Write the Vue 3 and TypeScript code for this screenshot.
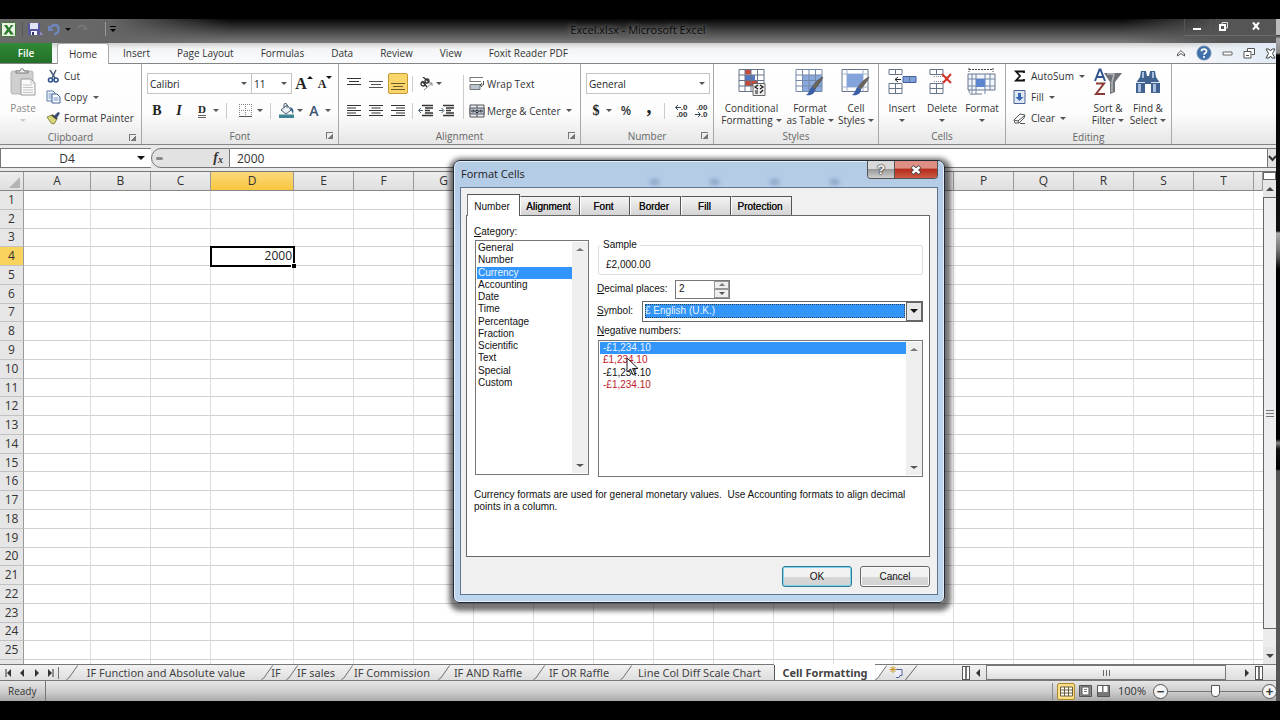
<script setup lang="ts">
import { ref } from 'vue'

const ribbonTabs = ['Home', 'Insert', 'Page Layout', 'Formulas', 'Data', 'Review', 'View', 'Foxit Reader PDF']
const columns = 'ABCDEFGHIJKLMNOPQRST'.split('')
const rows = Array.from({ length: 26 }, (_, i) => i + 1)

const sheets = [
  { name: 'IF Function and Absolute value', width: 195 },
  { name: 'IF', width: 25 },
  { name: 'IF sales', width: 55 },
  { name: 'IF Commission', width: 97 },
  { name: 'IF AND Raffle', width: 95 },
  { name: 'IF OR Raffle', width: 87 },
  { name: 'Line Col Diff Scale Chart', width: 154 },
]

const dialogTabs = ['Number', 'Alignment', 'Font', 'Border', 'Fill', 'Protection']
const categories = ['General', 'Number', 'Currency', 'Accounting', 'Date', 'Time', 'Percentage', 'Fraction', 'Scientific', 'Text', 'Special', 'Custom']
const category = ref('Currency')
const negatives = [
  { text: '-£1,234.10', red: false },
  { text: '£1,234.10', red: true },
  { text: '-£1,234.10', red: false },
  { text: '-£1,234.10', red: true },
]
const negative = ref(0)
const decimals = ref('2')
const formula = ref('2000')
const cellName = ref('D4')
const zoom = ref(50)
</script>

<template>
  <div class="screen">
    <main class="app">
      <header class="title">
        <div class="quick">
          <svg width="15" height="15" viewBox="0 0 15 15"><rect x=".5" y=".5" width="14" height="14" rx="1" fill="#e9f2e4" stroke="#3c7a33" /><path d="M3 3h3l2 3 2-3h2.500L9 7.500l4 5H9.500L7.500 9.500 5.500 12.500H2.500L6 7.500z" fill="#2c7a2a" /></svg>
          <i class="tsep"></i>
          <button aria-label="Save"><svg width="16" height="14" viewBox="0 0 16 14"><path d="M1 1h11l1 1v11H1z" fill="#55579f" /><path d="M3 1h8v6H3z" fill="#dfe3f4" /><path d="M4 9h6v4H4z" fill="#f4f5fb" /><path d="M5 10h2v3H5z" fill="#33356e" /><path d="M13 9l3 4h-3z" fill="#8d90c8" /></svg></button>
          <button aria-label="Undo"><svg width="14" height="14" viewBox="0 0 14 14"><path d="M4 5.500C6 2 11 2 11.500 6.500S9 12 7 12.500" fill="none" stroke="#6f86bd" stroke-width="2.500" /><path d="M1 3v6h6z" fill="#6f86bd" /></svg></button>
          <i class="dn black"></i>
          <button aria-label="Redo"><svg width="14" height="14" viewBox="0 0 14 14"><path d="M10 5C8 2.500 4 3 3 6" fill="none" stroke="#777" stroke-width="2" /><path d="M12 3v5H8z" fill="#777" /></svg></button>
          <i class="tsep last"></i>
          <i class="more"></i>
        </div>
        <h1>Excel.xlsx - Microsoft Excel</h1>
        <div class="winbtns">
          <button aria-label="Minimize"><svg width="10" height="10" viewBox="0 0 10 10"><path d="M1 7h8v2H1z" fill="#fff" /></svg></button>
          <button aria-label="Restore"><svg width="11" height="11" viewBox="0 0 11 11"><path d="M4 3V1.500h5.500V7H8" fill="none" stroke="#ddd" /><path d="M2 4h5v5H2z" fill="none" stroke="#fff" stroke-width="2" /></svg></button>
          <button aria-label="Close"><svg width="10" height="10" viewBox="0 0 10 10"><path d="M2 1.500l6 7M8 1.500l-6 7" stroke="#fff" stroke-width="2" /></svg></button>
        </div>
      </header>

      <nav class="tabs">
        <button class="file">File</button>
        <button v-for="t in ribbonTabs" :key="t" class="tab" :class="{ on: t === 'Home' }">{{ t }}</button>
        <div class="docbtns">
          <svg width="10" height="10" viewBox="0 0 10 10"><path d="M1.500 6L5 2.500 8.500 6v2L5 5.500 1.500 8z" fill="#fff" stroke="#555" /></svg>
          <svg width="16" height="16" viewBox="0 0 16 16"><circle cx="8" cy="8" r="7" fill="#3f6fa8" stroke="#6d8cb4" /><path d="M5.500 6.200C5.500 3.300 10.500 3.300 10.500 6.200 10.500 8 8 7.800 8 9.800" fill="none" stroke="#fff" stroke-width="1.800" /><circle cx="8" cy="12" r="1.100" fill="#fff" /></svg>
          <svg width="11" height="10" viewBox="0 0 11 10"><path d="M1 4h9v3H1z" fill="#fff" stroke="#666" /></svg>
          <svg width="12" height="12" viewBox="0 0 12 12"><path d="M4.500 4V1.500h7v6H9" fill="#fff" stroke="#555" /><path d="M1 4.500h7V11H1z" fill="#fff" stroke="#555" /><path d="M3 8h3v1H3z" fill="#555" /></svg>
          <svg width="11" height="11" viewBox="0 0 11 11"><path d="M1 1h3l1.500 2L7 1h3L7.500 5.500 10 10H7L5.500 8 4 10H1l2.500-4.500z" fill="#fff" stroke="#444" /></svg>
        </div>
      </nav>

      <section class="ribbon">
        <div class="group clip">
          <div class="body">
            <button class="big paste">
              <svg width="26" height="28" viewBox="0 0 26 28"><rect x="1" y="3" width="22" height="23" rx="2" fill="#cfcfcf" stroke="#b4b4b4" /><path d="M6 5V3h4c0-3 4-3 4 0h4v2z" fill="#eee" stroke="#777" /><path d="M11 11h10l4 4v12H11z" fill="#fafafa" stroke="#999" /><path d="M21 11v4h4M13 17h9M13 19.500h10M13 22h10M13 24.500h10" fill="none" stroke="#c4c4c4" /></svg>
              <span>Paste</span><i class="dn pale"></i>
            </button>
            <div class="stack">
              <button><svg width="15" height="14" viewBox="0 0 15 14"><path d="M4 1l5 8M10 1L6 9" stroke="#4d5d75" stroke-width="1.500" /><circle cx="4.500" cy="11" r="2" fill="none" stroke="#2d4f8f" stroke-width="1.600" /><circle cx="10" cy="11" r="2" fill="none" stroke="#2d4f8f" stroke-width="1.600" /></svg>Cut</button>
              <button><svg width="15" height="14" viewBox="0 0 15 14"><path d="M1 1h6l2 2v8H1z" fill="#eef4fb" stroke="#5b7ca6" /><path d="M2.500 4h4M2.500 6h4M2.500 8h4" stroke="#7f9cc2" /><path d="M6 4h5l3 3v6H6z" fill="#fff" stroke="#3d659b" /><path d="M7.500 8h5M7.500 10h5" stroke="#6e93c4" /></svg>Copy<i class="dn"></i></button>
              <button><svg width="15" height="14" viewBox="0 0 15 14"><path d="M8 5l4-4 2 1-3 5z" fill="#3c4c7a" /><path d="M1 6l5-2 5 4-3 5-3-1z" fill="#d9d67a" stroke="#8b8a45" /><path d="M6 4l5 4" stroke="#444" stroke-width="2" /></svg>Format Painter</button>
            </div>
          </div>
          <footer><span>Clipboard</span><i class="launch"></i></footer>
        </div>

        <div class="group font">
          <div class="lines">
            <div class="line f1">
              <label class="combo"><select aria-label="Font"><option>Calibri</option></select><i class="dn"></i></label>
              <label class="combo second"><select aria-label="Font size"><option>11</option></select><i class="dn"></i></label>
              <button class="serif grow" aria-label="Grow font">A<i class="up black"></i></button>
              <button class="serif shrink" aria-label="Shrink font">A<i class="dn black"></i></button>
            </div>
            <div class="line f2">
              <button class="serif">B</button>
              <button class="serif it">I</button>
              <button class="serif dunder"><span>D</span></button><i class="dn"></i>
              <i class="vs"></i>
              <button aria-label="Borders"><svg width="13" height="13" viewBox="0 0 13 13"><path d="M.5 0v13M6.500 0v13M12.500 0v13M0 .5h13M0 6.500h13" stroke="#888" stroke-dasharray="1 1" /><path d="M0 12.500h13" stroke="#555" /></svg></button><i class="dn"></i>
              <i class="vs"></i>
              <button aria-label="Fill colour"><svg width="16" height="15" viewBox="0 0 16 15"><path d="M2 7l6-5 4 5-5 4z" fill="#eef3f8" stroke="#46566c" /><path d="M5 5V1.500C5 0 8 0 8 2v3" fill="none" stroke="#46566c" /><path d="M11 4c3 1 4 3 3 7l-2-4z" fill="#2f5f93" /><path d="M0 11.500h15V15H0z" fill="#3d8594" /></svg></button><i class="dn"></i>
              <button class="fcol" aria-label="Font colour">A</button><i class="dn"></i>
            </div>
          </div>
          <footer><span>Font</span><i class="launch"></i></footer>
        </div>

        <div class="group align">
          <div class="agrid">
            <button aria-label="Top"><svg width="14" height="13" viewBox="0 0 14 13"><path d="M0 1.500h14M2 4.500h10M0 7.500h14" stroke="#333" /></svg></button>
            <button aria-label="Middle"><svg width="14" height="13" viewBox="0 0 14 13"><path d="M0 4.500h14M2 7.500h10M0 10.500h14" stroke="#555" /></svg></button>
            <button class="sel" aria-label="Bottom"><svg width="14" height="13" viewBox="0 0 14 13"><path d="M0 6.500h14M2 9.500h10M0 12.500h14" stroke="#6b5a2a" /></svg></button>
            <i class="vs"></i>
            <button class="wide" aria-label="Orientation"><svg width="15" height="14" viewBox="0 0 15 14"><g fill="none" stroke="#333" stroke-width="1.300"><circle cx="4" cy="7" r="2" /><path d="M3 4l5 6" /><circle cx="8" cy="4" r="2" /><path d="M4 0l6 5" /></g><path d="M5 13l8-7M13 6v3M13 6h-3" stroke="#888" fill="none" /></svg><i class="dn"></i></button>
            <i class="vs tall"></i>
            <button class="txt"><svg width="16" height="15" viewBox="0 0 16 15"><path d="M1 1.500h13M1 5.500h11M1 1v5" stroke="#777" fill="none" /><path d="M1 8.500h10v5H1z" fill="#b9c3d2" stroke="#777" /><path d="M14.500 5v4h-3M13 7l-2 2 2 2" fill="none" stroke="#555" /></svg>Wrap Text</button>
            <button aria-label="Left"><svg width="14" height="13" viewBox="0 0 14 13"><path d="M0 1.500h14M0 4h9M0 6.500h14M0 9h9M0 11.500h14" stroke="#333" /></svg></button>
            <button aria-label="Centre"><svg width="14" height="13" viewBox="0 0 14 13"><path d="M0 1.500h14M2.500 4h9M0 6.500h14M2.500 9h9M0 11.500h14" stroke="#333" /></svg></button>
            <button aria-label="Right"><svg width="14" height="13" viewBox="0 0 14 13"><path d="M0 1.500h14M5 4h9M0 6.500h14M5 9h9M0 11.500h14" stroke="#333" /></svg></button>
            <i class="vs"></i>
            <button aria-label="Decrease indent"><svg width="15" height="13" viewBox="0 0 15 13"><path d="M4 1.500h11M7 4h8M7 6.500h5M7 9h8M4 11.500h11" stroke="#333" stroke-width="1.400" /><path d="M5 6.500H1M3 4L.5 6.500 3 9" fill="none" stroke="#4a5a72" /></svg></button>
            <button aria-label="Increase indent"><svg width="15" height="13" viewBox="0 0 15 13"><path d="M4 1.500h11M7 4h8M7 6.500h5M7 9h8M4 11.500h11" stroke="#333" stroke-width="1.400" /><path d="M0 6.500h4M2.500 4L5 6.500 2.500 9" fill="none" stroke="#4a5a72" /></svg></button>
            <button class="txt"><svg width="16" height="14" viewBox="0 0 16 14"><path d="M1 1h14v12H1zM8 1v3M8 10v3" fill="#e9eef6" stroke="#555" /><path d="M1 4h14v6H1z" fill="#bcc8da" stroke="#555" /><path d="M2 7h3M4 5.500L5.500 7 4 8.500M14 7h-3M12 5.500L10.500 7 12 8.500" stroke="#222" fill="none" /><circle cx="8" cy="7.300" r="1.300" fill="none" stroke="#111" /></svg>Merge &amp; Center<i class="dn"></i></button>
          </div>
          <footer><span>Alignment</span><i class="launch"></i></footer>
        </div>

        <div class="group number">
          <div class="lines">
            <label class="combo"><select aria-label="Number format"><option>General</option></select><i class="dn"></i></label>
            <div class="line n2">
              <button class="serif">$</button><i class="dn"></i>
              <button class="pct">%</button>
              <button class="serif comma">,</button>
              <i class="vs"></i>
              <button class="dec" aria-label="Increase decimal"><span><svg width="6" height="5" viewBox="0 0 6 5"><path d="M6 2.500H1M3 0L.5 2.500 3 5" fill="none" stroke="#345" /></svg>.0</span><span>.00</span></button>
              <button class="dec" aria-label="Decrease decimal"><span>.00</span><span><svg width="6" height="5" viewBox="0 0 6 5"><path d="M0 2.500h5M3 0l2.500 2.500L3 5" fill="none" stroke="#345" /></svg>.0</span></button>
            </div>
          </div>
          <footer><span>Number</span><i class="launch"></i></footer>
        </div>

        <div class="group styles">
          <div class="body">
            <button class="big w66">
              <svg width="30" height="28" viewBox="0 0 30 28"><path d="M2 1.500h25v22H2z" fill="#fff" /><path d="M8 1.500h6v5H8zM8 13h12v5H8z" fill="#c8493c" /><path d="M8 7h10v5.500H8z" fill="#5277c4" /><path d="M2 1.500h25v22H2zM2 7h25M2 12.500h25M2 18h25M8 1.500v22M14 1.500v22M20.500 1.500v22" fill="none" stroke="#66748a" /><path d="M16 15.500h12v12H16z" fill="#eee" stroke="#666" /><path d="M21 17l-3 2 3 2M18 23h3M18 25h3M23 17l3 2-3 2M23 25l3-3" fill="none" stroke="#111" stroke-width="1.200" /></svg>
              <span>Conditional</span><span>Formatting<i class="dn"></i></span>
            </button>
            <button class="big w50">
              <svg width="30" height="28" viewBox="0 0 30 28"><path d="M1 1.500h26v22H1z" fill="#fff" /><path d="M7.500 7H27v16.500H7.500z" fill="#8aa9dd" /><path d="M1 1.500h26v22H1zM1 7h26M1 12.500h26M1 18h26M7.500 1.500v22M14 1.500v22M20.500 1.500v22" fill="none" stroke="#7387a8" /><path d="M28 9c-5 2-8 6-11 10l3 2c3-4 6-7 8-12z" fill="#6b655a" stroke="#444" stroke-width=".5" /><path d="M17 19c-3 1-2 6-6 8 5 1 9-1 9-6z" fill="#3b5fa5" /></svg>
              <span>Format</span><span>as Table<i class="dn"></i></span>
            </button>
            <button class="big w42">
              <svg width="30" height="28" viewBox="0 0 30 28"><path d="M1 1.500h26v22H1z" fill="#fff" stroke="#66748a" /><path d="M1 6h26M1 19h26M6 1.500v22M22 1.500v22" stroke="#9fb0cc" /><path d="M6 6h16v13H6z" fill="#82a3dc" /><path d="M28 9c-5 2-8 6-11 10l3 2c3-4 6-7 8-12z" fill="#6b655a" stroke="#444" stroke-width=".5" /><path d="M17 19c-3 1-2 6-6 8 5 1 9-1 9-6z" fill="#3b5fa5" /></svg>
              <span>Cell</span><span>Styles<i class="dn"></i></span>
            </button>
          </div>
          <footer><span>Styles</span></footer>
        </div>

        <div class="group cells">
          <div class="body">
            <button class="big w40">
              <svg width="30" height="28" viewBox="0 0 30 28"><g fill="#fff" stroke="#66748a"><path d="M2 1.500h13v5H2zM8.500 1.500v5M2 15.500h13v10H2zM2 20.500h13M8.500 15.500v10" /><path d="M16 8.500h13v6H16z" fill="#7fa0da" stroke="#3d5f9c" /><path d="M22.500 8.500v6" /></g><path d="M14 11.500H8M11 9l-3 2.500 3 2.500" fill="none" stroke="#222" /></svg>
              <span>Insert</span><i class="dn"></i>
            </button>
            <button class="big w40">
              <svg width="30" height="28" viewBox="0 0 30 28"><g fill="#fff" stroke="#66748a"><path d="M3 1.500h13v5H3zM9.500 1.500v5M3 15.500h13v10H3zM3 20.500h13M9.500 15.500v10" /></g><path d="M7 8.500h12M7 13.500h12M19 8v6" stroke="#889" stroke-dasharray="1 1" /><path d="M15 6l9 9M24 6l-8 9" stroke="#d2362b" stroke-width="2" /></svg>
              <span>Delete</span><i class="dn"></i>
            </button>
            <button class="big w40">
              <svg width="30" height="28" viewBox="0 0 30 28"><path d="M2 1.500h24M2 0v4M26 0v4" stroke="#444" stroke-dasharray="2 1" /><path d="M1 6h27v16H1z" fill="#f3f6fb" stroke="#66748a" /><path d="M1 11h27M1 18h27M9 6v20M18 6v20M23 6v16M5 6v20" stroke="#7387a8" /><path d="M9 11h9v8H9z" fill="#5c85cf" /><path d="M2 22c0 4 2 5 6 4h7" fill="none" stroke="#66748a" /></svg>
              <span>Format</span><i class="dn"></i>
            </button>
          </div>
          <footer><span>Cells</span></footer>
        </div>

        <div class="group editing">
          <div class="body">
            <div class="stack">
              <button><svg width="13" height="14" viewBox="0 0 13 14"><path d="M11 4V2.500H3L7 7l-4 4.500h8V10" fill="none" stroke="#111" stroke-width="1.800" /></svg>AutoSum<i class="dn far"></i></button>
              <button><svg width="13" height="14" viewBox="0 0 13 14"><path d="M1 .5h11v13H1z" fill="#dfe8f5" stroke="#4a6390" /><path d="M5 3h3v4h2.500l-4 4-4-4H5z" fill="#3c66b4" /></svg>Fill<i class="dn"></i></button>
              <button><svg width="13" height="14" viewBox="0 0 13 14"><path d="M1 9l6-6 5 1-1 3-5 5H2z" fill="#fff" stroke="#555" /><path d="M1 9l4 1 6-5M5 10l1 2M7 12.500h5" fill="none" stroke="#555" /></svg>Clear<i class="dn"></i></button>
            </div>
            <button class="big w40">
              <svg width="30" height="28" viewBox="0 0 30 28"><path d="M2 13L6.500 1.500h1L12 13M4 9h6" fill="none" stroke="#33558f" stroke-width="2" /><path d="M3 15.500h8L3 26h9" fill="none" stroke="#8c3a33" stroke-width="2" /><path d="M11 5h18l-7 9v10l-5 2V14z" fill="#6f7277" /><path d="M14 6h7l-2 8v10" fill="none" stroke="#b8babd" stroke-width="1.500" /></svg>
              <span>Sort &amp;</span><span>Filter<i class="dn"></i></span>
            </button>
            <button class="big w40">
              <svg width="30" height="28" viewBox="0 0 30 28"><path d="M8 3h5l1 5h2l1-5h5l1 6 4 6v10h-9v-9h-6v9H3V15l4-6z" fill="#41618f" /><path d="M5 16h3v8H5zM20 16h3v8h-3zM9 4h2v6H9zM19 4h2v6h-2z" fill="#a9bfdf" /><path d="M3 14.500h9M18 14.500h9" stroke="#dbe5f2" /></svg>
              <span>Find &amp;</span><span>Select<i class="dn"></i></span>
            </button>
          </div>
          <footer><span>Editing</span></footer>
        </div>
      </section>

      <section class="fbar">
        <label class="namebox"><input v-model="cellName" aria-label="Name box" /><i class="dn black"></i></label>
        <div class="fx"><i class="knob"></i><button aria-label="Insert function">f<small>x</small></button></div>
        <input v-model="formula" class="formula" aria-label="Formula" />
        <button class="expand" aria-label="Expand"><svg width="9" height="7" viewBox="0 0 9 7"><path d="M1 1l3.500 4L8 1" fill="none" stroke="#333" stroke-width="2" /></svg></button>
      </section>

      <section class="work">
        <div class="gridwrap">
          <table class="grid">
            <colgroup><col class="c0" /><col class="cA" /><col class="cn" /><col class="cn" /><col class="cD" /><col v-for="n in 16" :key="n" class="cn" /><col /></colgroup>
            <thead>
              <tr><th class="corner"><svg width="11" height="11" viewBox="0 0 11 11"><path d="M11 0v11H0z" fill="#b4b4b4" /></svg></th><th v-for="c in columns" :key="c" :class="{ hot: c === 'D' }">{{ c }}</th><th></th></tr>
            </thead>
            <tbody>
              <tr v-for="r in rows" :key="r">
                <th :class="{ hot: r === 4 }">{{ r }}</th>
                <td v-for="c in columns" :key="c" :class="{ cur: r === 4 && c === 'D' }">{{ r === 4 && c === 'D' ? '2000' : '' }}</td>
                <td></td>
              </tr>
            </tbody>
          </table>
        </div>
        <div class="vscroll">
          <i class="split"></i>
          <button aria-label="Scroll up"><i class="up big-a"></i></button>
          <div class="vthumb"><i></i><i></i><i></i></div>
          <button aria-label="Scroll down"><i class="dn big-a"></i></button>
        </div>
      </section>

      <section class="sheetbar">
        <div class="navs">
          <button aria-label="First"><svg width="7" height="8" viewBox="0 0 7 8"><path d="M1 0v8" stroke="#333" /><path d="M6 0v8L2 4z" fill="#333" /></svg></button>
          <button aria-label="Previous"><svg width="7" height="8" viewBox="0 0 7 8"><path d="M5 0v8L1 4z" fill="#333" /></svg></button>
          <button aria-label="Next"><svg width="7" height="8" viewBox="0 0 7 8"><path d="M2 0v8l4-4z" fill="#333" /></svg></button>
          <button aria-label="Last"><svg width="7" height="8" viewBox="0 0 7 8"><path d="M6 0v8" stroke="#333" /><path d="M1 0v8l4-4z" fill="#333" /></svg></button>
        </div>
        <button v-for="s in sheets" :key="s.name" class="stab" :style="{ width: s.width + 'px' }">
          <svg class="slash" width="13" height="16" viewBox="0 0 13 16"><path d="M0 15.500L2.500 14 12 .5" fill="none" stroke="#666" /></svg><span>{{ s.name }}</span>
        </button>
        <button class="stab active"><span>Cell Formatting</span></button>
        <button class="stab new" aria-label="Insert sheet">
          <svg class="slash" width="13" height="16" viewBox="0 0 13 16"><path d="M0 0h13L2.500 14 0 15.500z" fill="#fff" /><path d="M0 15.500L2.500 14 12 .5" fill="none" stroke="#666" /></svg>
          <svg width="14" height="13" viewBox="0 0 14 13"><path d="M5 3.500h8v6h-2l-1 2H7" fill="#eef" stroke="#4f649c" /><path d="M4 0v7M.5 3.500h7M1.500 1l5 5M6.500 1l-5 5" stroke="#c79a2b" /></svg>
        </button>
        <svg width="13" height="16" viewBox="0 0 13 16"><path d="M0 15.500L12 .5" fill="none" stroke="#666" /></svg>
        <div class="fill"></div>
        <div class="hscroll">
          <i class="handle"></i>
          <button aria-label="Scroll left"><svg width="6" height="8" viewBox="0 0 6 8"><path d="M5 0v8L1 4z" fill="#333" /></svg></button>
          <div class="hthumb"><i></i><i></i><i></i></div>
          <button class="rt" aria-label="Scroll right"><svg width="6" height="8" viewBox="0 0 6 8"><path d="M1 0v8l4-4z" fill="#333" /></svg></button>
          <i class="handle"></i>
        </div>
      </section>

      <footer class="status">
        <span class="ready">Ready</span>
        <div class="views">
          <button class="sel" aria-label="Normal view"><svg width="13" height="11" viewBox="0 0 13 11"><path d="M.5 1h12v9H.5zM.5 4h12M.5 7h12M4.500 1v9M8.500 1v9" fill="#fff" stroke="#6b5f3a" /></svg></button>
          <button aria-label="Page layout view"><svg width="13" height="12" viewBox="0 0 13 12"><path d="M.5 .5h12v11H.5z" fill="#8b8b8b" stroke="#555" /><path d="M3 2h7v8H3z" fill="#fff" stroke="#555" /><path d="M5 4.500h3M5 6.500h3" stroke="#777" /></svg></button>
          <button aria-label="Page break view"><svg width="13" height="12" viewBox="0 0 13 12"><path d="M.5 .5h12v11H.5z" fill="#777" stroke="#555" /><path d="M1 1h4v6H1zM6.500 1h4v6h-4z" fill="#fff" /></svg></button>
        </div>
        <span class="pct100">100%</span>
        <button class="round" aria-label="Zoom out">−</button>
        <input v-model="zoom" type="range" min="0" max="100" aria-label="Zoom" />
        <button class="round" aria-label="Zoom in">+</button>
      </footer>
    </main>
    <div class="edge"></div>

    <section class="dialog" role="dialog" aria-label="Format Cells">
      <header>
        <h2>Format Cells</h2>
        <div class="ghosts"><i></i><i></i><i></i><i></i></div>
        <div class="dbtns">
          <button aria-label="Help">?</button>
          <button class="x" aria-label="Close"><svg width="12" height="10" viewBox="0 0 12 10"><path d="M2 1.500l8 7M10 1.500l-8 7" stroke="#444" stroke-width="4" /><path d="M2.500 2l7 6M9.500 2l-7 6" stroke="#fff" stroke-width="2.400" /></svg></button>
        </div>
      </header>
      <div class="client">
        <div class="dtabs"><button v-for="t in dialogTabs" :key="t" :class="['t-' + t.toLowerCase(), { on: t === 'Number' }]">{{ t }}</button></div>
        <div class="panel">
          <div class="cols">
            <div class="left">
              <span class="lbl"><u>C</u>ategory:</span>
              <div class="list">
                <div class="items" role="listbox" aria-label="Category">
                  <div v-for="c in categories" :key="c" role="option" :class="{ on: c === category }" @click="category = c">{{ c }}</div>
                </div>
                <div class="sb"><i class="up"></i><i class="dn"></i></div>
              </div>
            </div>
            <div class="right">
              <fieldset><legend>Sample</legend>£2,000.00</fieldset>
              <div class="row decrow">
                <label for="dp"><u>D</u>ecimal places:</label>
                <div class="spin"><input id="dp" v-model="decimals" /><div><button aria-label="More"><i class="up"></i></button><button aria-label="Less"><i class="dn"></i></button></div></div>
              </div>
              <div class="row symrow">
                <label for="sym"><u>S</u>ymbol:</label>
                <div class="drop"><select id="sym"><option>£ English (U.K.)</option></select><span class="arrow"><i class="dn black"></i></span></div>
              </div>
              <span class="lbl neg"><u>N</u>egative numbers:</span>
              <div class="list">
                <div class="items" role="listbox" aria-label="Negative numbers">
                  <div v-for="(n, i) in negatives" :key="i" role="option" :class="{ on: i === negative, red: n.red }" @click="negative = i">{{ n.text }}</div>
                </div>
                <div class="sb"><i class="up"></i><i class="dn"></i></div>
              </div>
            </div>
          </div>
          <p>Currency formats are used for general monetary values.&nbsp; Use Accounting formats to align decimal points in a column.</p>
        </div>
        <div class="actions"><button class="ok">OK</button><button>Cancel</button></div>
      </div>
      <svg class="pointer" width="13" height="20" viewBox="0 0 13 20"><path d="M1 1v14l3.500-3 2.500 6 2-1-2.500-5.500H12z" fill="#fff" stroke="#222" /></svg>
    </section>
  </div>
</template>

<style>
body { margin: 0; background: #000; }
</style>

<style scoped>
* { box-sizing: border-box; }
.screen { position: relative; display: flex; height: 100vh; padding: 19px 0; background: #000; font: 10px/12px "Open Sans", "Noto Sans", sans-serif; color: #333; overflow: hidden; }
.app { flex: 1; min-width: 0; display: flex; flex-direction: column; background: #fff; }
.edge { width: 4px; background: linear-gradient(#bbb 0, #bbb 16px, #333 16px, #aaa 20px, #888 34px, #000 36px, #111 212px, #aaa 214px, #777 230px, #444 240px, #000 250px, #000 420px, #888 424px, #111 430px, #000 450px, #555 452px, #555 100%); }
button, input, select { font: inherit; color: inherit; padding: 0; margin: 0; border: 0; background: none; border-radius: 0; min-width: 0; }
button { display: flex; align-items: center; justify-content: center; white-space: nowrap; }
select { appearance: none; }
svg { display: block; flex: none; }
i { display: block; flex: none; }
.dn { border: 3px solid transparent; border-top-color: #555; border-bottom: 0; width: 6px; height: 3px; }
.up { border: 3px solid transparent; border-bottom-color: #777; border-top: 0; width: 6px; height: 3px; }
.dn.black { border-top-color: #111; }
.up.black { border-bottom-color: #111; }
.dn.pale { border-top-color: #ccc; }

.title { height: 24px; display: flex; justify-content: space-between; background: linear-gradient(90deg, #6a6a6a 0, #666 110px, transparent 230px, transparent 88%, #555 96%), linear-gradient(#060606, #444 50%, #7c7c7c); }
.quick { width: 420px; display: flex; align-items: center; gap: 4px; padding: 0 0 4px 1px; }
.tsep { width: 1px; height: 14px; background: #555; margin: 0 0 0 2px; }
.tsep.last { background: #999; margin-left: 12px; }
.more { width: 6px; height: 7px; border-top: 1px solid #000; position: relative; }
.more::after { content: ""; position: absolute; left: 0; top: 2px; border: 3px solid transparent; border-top-color: #000; border-bottom: 0; }
.title h1 { margin: 0; font: 11px/22px "Open Sans", sans-serif; color: #0a0a0a; text-shadow: 0 0 6px #aaa; white-space: nowrap; }
.winbtns { width: 420px; height: 17px; display: flex; justify-content: flex-end; }
.winbtns button { width: 26px; border-left: 1px solid #555; border-bottom: 1px solid #6a6a6a; padding-bottom: 2px; }
.winbtns button:last-child { width: 40px; }

.tabs { height: 21px; display: flex; background: linear-gradient(#cfcfcf, #f4f5f7 6px, #fafbfc); border-bottom: 1px solid #858585; }
.tabs button { padding: 0 11px; margin-right: 5px; height: 20px; color: #333; }
.tabs .file { width: 52px; margin-right: 5px; background: linear-gradient(#2f8a35, #236f29); color: #fff; font-weight: 600; }
.tabs .tab.on { height: 21px; padding: 0 11px; background: #fff; border: 1px solid #aaa; border-bottom: 0; border-radius: 3px 3px 0 0; margin-right: 3px; width: 52px; }
.docbtns { margin-left: auto; display: flex; align-items: center; gap: 10px; padding: 0; background: linear-gradient(90deg, transparent, #e2ebf6); }

.ribbon { height: 81px; display: flex; background: linear-gradient(#fff 0, #fdfdfd 60%, #e6e6e6); border-bottom: 1px solid #858585; }
.group { display: flex; flex-direction: column; border-right: 1px solid #a8a8a8; }
.group footer { margin-top: auto; height: 16px; display: flex; align-items: center; color: #666; padding-bottom: 1px; }
.group footer span { flex: 1; text-align: center; }
.launch { width: 7px; height: 7px; margin-right: 5px; margin-left: -12px; border: solid #777; border-width: 1px 0 0 1px; background: linear-gradient(135deg, transparent 55%, #777 55%); }
.body { display: flex; padding-top: 4px; }
.clip { width: 142px; } .font { width: 197px; } .align { width: 242px; } .number { width: 133px; } .styles { width: 165px; } .cells { width: 127px; } .editing { width: 166px; }
.big { flex-direction: column; justify-content: flex-start; align-items: center; }
.big svg { margin-bottom: 6px; }
.big span { display: flex; align-items: center; height: 12px; }
.big span .dn { margin-left: 3px; }
.big > .dn { margin-top: 5px; }
.paste { width: 46px; color: #888; }
.stack { display: flex; flex-direction: column; }
.stack button { height: 20px; justify-content: flex-start; gap: 3px; padding-bottom: 4px; margin-bottom: 1px; }
.stack .dn { margin-left: 3px; }
.editing .stack { width: 82px; padding-left: 7px; }
.editing .stack button { gap: 5px; }
.editing .stack .dn { margin-left: 0; }
.w66 { width: 67px; } .w50 { width: 50px; } .w42 { width: 42px; } .w40 { width: 40px; }
.styles .body { padding-left: 4px; }
.cells .body { padding-left: 3px; }

.lines { padding: 9px 3px 0 5px; display: flex; flex-direction: column; gap: 6px; }
.combo { height: 21px; display: flex; align-items: center; border: 1px solid #c4c4c4; background: #fff; padding: 0 4px 0 2px; }
.combo select { flex: 1; height: 19px; color: #222; }
.combo.second { border-left: 0; padding-left: 2px; }
.line { display: grid; align-items: center; height: 21px; grid-template-rows: 21px; }
.f1 { grid-template-columns: 105px 40px 24px 18px; }
.f2 { grid-template-columns: 20px 24px 22px 6px 14px 24px 6px 14px 20px 6px 22px 6px; }
.n2 { grid-template-columns: 20px 6px 28px 18px 12px 20px 20px; }
.serif { font: bold 14px/20px "Liberation Serif", serif; color: #222; }
.grow { font-size: 16px; align-items: flex-end; }
.grow .up, .shrink .dn { align-self: flex-start; margin-top: 2px; }
.shrink { font-size: 12px; }
.it { font-style: italic; }
.dunder { font-size: 11px; }
.dunder span { height: 15px; line-height: 12px; border-bottom: 3px double #666; }
.fcol { color: #3d5470; font: 600 14px/20px "Open Sans", sans-serif; }
.vs { width: 1px; height: 16px; background: #ccc; justify-self: center; }
.pct { font-size: 12px; font-weight: 600; }
.comma { font-size: 20px; line-height: 8px; height: 20px; padding-bottom: 10px; }
.dec { flex-direction: column; font: bold 8px/7px "Liberation Sans", sans-serif; }
.dec span { display: flex; align-items: center; justify-content: flex-end; width: 15px; height: 7px; }

.agrid { display: grid; grid-template-columns: 22px 22px 22px 6px 21px 21px 12px 1fr; grid-template-rows: 21px 21px; row-gap: 6px; padding: 9px 3px 0 4px; align-items: center; }
.agrid .sel { height: 21px; width: 20px; justify-self: center; background: #f9d56a; border: 1px solid #c29a3a; border-radius: 2px; }
.agrid .wide { grid-column: span 2; justify-content: flex-start; padding-left: 4px; gap: 2px; }
.agrid .tall { grid-row: span 2; height: 44px; }
.agrid .txt { justify-content: flex-start; gap: 2px; }
.agrid .txt .dn { margin-left: 3px; }

.fbar { height: 26px; padding: 3px 0; display: flex; background: #e9e9e9; }
.fbar > * { border-top: 1px solid #777; border-bottom: 1px solid #777; }
.namebox { width: 151px; display: flex; align-items: center; background: #fff; border-left: 1px solid #777; padding-right: 6px; }
.namebox input { flex: 1; text-align: center; font-size: 12px; height: 18px; padding-right: 4px; }
.namebox .dn { border-width: 4px; border-bottom: 0; width: 8px; height: 4px; }
.fx { width: 79px; display: flex; align-items: center; justify-content: space-between; background: #e2e2e2; border-left: 1px solid #777; border-radius: 10px 0 0 10px; border-right: 1px solid #777; padding: 0 6px 0 4px; }
.knob { width: 7px; height: 3px; background: #888; border-radius: 2px; }
.fx button { font: italic bold 14px/16px "Liberation Serif", serif; align-items: flex-end; }
.fx small { font-size: 10px; line-height: 13px; }
.formula { flex: 1; background: #fff; font-size: 12px; padding-left: 7px; }
.expand { width: 9px; background: #e2e2e2; border-left: 1px solid #777; }

.work { flex: 1; min-height: 0; display: flex; border-top: 1px solid #777; }
.gridwrap { flex: 1; min-width: 0; overflow: hidden; }
.grid { width: 100%; height: 507px; table-layout: fixed; border-collapse: separate; border-spacing: 0; font-size: 12px; line-height: 14px; }
.c0 { width: 24px; } .cA { width: 67px; } .cn { width: 60px; } .cD { width: 83px; }
.grid th { font-weight: 400; padding: 0; background: #e6e6e6; border-right: 1px solid #999; border-bottom: 1px solid #c2c2c2; }
.grid thead th { height: 19px; border-bottom-color: #888; background: linear-gradient(#ededed, #dfdfdf); }
.grid thead th.hot { background: linear-gradient(#fbd97c, #f8c63f); }
.grid tbody th.hot { background: #fad35e; }
.corner svg { margin: 3px 3px 0 auto; }
.grid td { padding: 0; border-right: 1px solid #dcdcdc; border-bottom: 1px solid #d0d0d0; text-align: right; color: #222; }
.grid td:last-child { border-right: 0; }
.grid td.cur { position: relative; padding-right: 1px; outline: 2px solid #000; outline-offset: -1px; }
.grid td.cur::after { content: ""; position: absolute; right: -3px; bottom: -3px; width: 4px; height: 4px; background: #000; border: solid #fff; border-width: 1px 0 0 1px; }
.vscroll { width: 13px; display: flex; flex-direction: column; background: #ececec; }
.vscroll .split { height: 8px; border: 1px solid #666; background: #fff; }
.vscroll button { height: 17px; background: #e6e6e6; }
.big-a { border-width: 4px; width: 8px; height: 4px; }
.up.big-a { border-top: 0; border-bottom-color: #444; }
.dn.big-a { border-bottom: 0; border-top-color: #444; }
.vthumb { flex: 1; border: solid #666; border-width: 1px 0 1px 1px; margin-bottom: 18px; background: #ededf0; display: flex; flex-direction: column; align-items: center; justify-content: center; gap: 2px; }
.vthumb i { width: 8px; height: 1px; background: #777; }

.sheetbar { height: 17px; display: flex; background: linear-gradient(#f2f2f2, #dedede); border: solid #777; border-width: 1px 0; }
.navs { display: flex; width: 66px; align-items: center; gap: 1px; padding-left: 2px; }
.navs button { width: 13px; height: 15px; }
.navs::after { content: ""; width: 1px; height: 12px; background: #777; }
.stab { display: flex; font: 11px/15px "Noto Sans", sans-serif; height: 15px; color: #444; }
.stab span { flex: 1; text-align: center; }
.stab .slash { margin-right: -8px; height: 15px; }
.stab.active { width: 101px; height: 15px; background: #fff; font-weight: 700; border-left: 1px solid #555; box-shadow: 0 -1px 0 #fff; }
.stab.new { width: 30px; justify-content: flex-start; }
.stab.new .slash { margin-right: 1px; }
.fill { flex: 1; }
.hscroll { width: 314px; padding-right: 13px; display: flex; align-items: center; }
.handle { width: 8px; height: 14px; border: 1px solid #555; background: linear-gradient(90deg, #fff 40%, #777 40%, #777 60%, #fff 60%); }
.hscroll button { width: 16px; height: 15px; }
.hscroll .rt { width: 29px; padding-left: 12px; }
.hthumb { flex: 1; height: 15px; border: 1px solid #777; background: linear-gradient(#fafafa, #ddd); display: flex; justify-content: center; align-items: center; gap: 2px; }
.hthumb i { width: 1px; height: 6px; background: #666; }

.status { height: 20px; display: flex; align-items: center; background: linear-gradient(#e6e6e6, #c9c9c9 60%, #a8a8a8); }
.ready { width: 46px; line-height: 20px; padding-left: 8px; border-right: 1px solid #777; }
.views { margin-left: auto; display: flex; align-items: center; gap: 3px; border-left: 1px solid #888; padding-left: 4px; }
.views button { width: 15px; height: 17px; }
.views .sel { width: 18px; background: #fbe08a; border: 1px solid #b08a2a; border-radius: 2px; }
.pct100 { width: 42px; text-align: center; font-size: 11px; }
.round { width: 15px; height: 15px; border: 1px solid #555; border-radius: 50%; background: #f4f4f4; font: bold 13px/13px "Liberation Sans", sans-serif; flex: none; }
.status input { appearance: none; width: 94px; height: 15px; background: linear-gradient(transparent 7px, #777 7px, #777 8px, transparent 8px); }
.status input::-webkit-slider-thumb { appearance: none; width: 9px; height: 12px; background: #fff; border: 1px solid #555; border-radius: 1px 1px 5px 5px; }
.status .round:last-child { margin-right: -1px; }

.dialog { position: absolute; left: 453px; top: 160px; width: 492px; border: 1px solid #222a33; border-radius: 7px 7px 6px 6px; background: linear-gradient(#b4cbe6, #bcd4ee 130px, #bdd6ee); padding: 0 6px 7px; box-shadow: inset 0 0 0 1px #e4effa, 1px 3px 5px 5px rgba(0, 0, 0, .55); font: 10px/12px "Liberation Sans", Arial, sans-serif; color: #111; }
.dialog header { height: 26px; display: flex; align-items: center; justify-content: space-between; }
.dialog h2 { margin: 0 0 0 1px; font: 11px/24px "Open Sans", sans-serif; color: #222; }
.ghosts { display: flex; gap: 51px; padding-top: 16px; margin-left: auto; margin-right: 28px; }
.ghosts i { width: 9px; height: 6px; background: #6683a8; filter: blur(2px); opacity: .5; }
.dbtns { display: flex; align-self: flex-start; border: 1px solid #555; border-top: 0; border-radius: 0 0 4px 4px; overflow: hidden; }
.dbtns button { width: 26px; height: 17px; background: linear-gradient(#d9d9d9 45%, #9a9a9a 50%, #cfcfcf); font: bold 13px/16px "Liberation Sans", sans-serif; color: #fff; text-shadow: 0 0 1px #000, 0 0 2px #000; }
.dbtns .x { width: 43px; background: linear-gradient(#dd8f84 40%, #b62e1d 50%, #cb5a46); border-left: 1px solid #555; }
.client { border: 1px solid #60768f; background: #f0f0f0; padding: 6px 7px 7px 5px; }
.dtabs { display: flex; align-items: flex-end; padding-left: 1px; }
.dtabs button { height: 19px; border: 1px solid #555; border-bottom: 0; border-left-color: #fff; padding: 2px 3px 0 0; background: linear-gradient(#f4f4f4, #d4d4d4); color: #111; text-shadow: 0 0 0 #111; }
.dtabs .on { height: 22px; background: #fff; border-left-color: #777; text-shadow: none; margin-bottom: -1px; position: relative; }
.t-number { width: 53px; } .t-alignment { width: 60px; } .t-font { width: 50px; } .t-border { width: 51px; } .t-fill { width: 50px; } .t-protection { width: 61px; }
.panel { border: 1px solid #666; background: #fff; height: 342px; padding: 8px 6px 0 7px; }
.cols { display: grid; grid-template-columns: 115px 1fr; column-gap: 8px; }
.left, .right { display: flex; flex-direction: column; min-width: 0; }
.lbl { height: 16px; line-height: 16px; }
.list { display: flex; border: 1px solid #777; background: #fff; flex: 1; padding: 1px 0 1px 1px; }
.left .list { flex: none; height: 235px; margin-left: 1px; }
.items { flex: 1; display: grid; grid-auto-rows: 1fr; align-self: flex-start; height: 147px; }
.right .items { height: 49px; }
.items div { padding-left: 1px; }
.right .items div { padding-left: 3px; }
.items .red { color: #c0202a; }
.items .on { background: #3295fb; color: #e9f4ff; }
.sb { width: 16px; background: #efefef; display: flex; flex-direction: column; justify-content: space-between; align-items: center; padding: 6px 0; }
.sb .dn, .sb .up { border-left-width: 4px; border-right-width: 4px; width: 8px; }
fieldset { margin: 15px 0 0 1px; height: 36px; min-width: 0; border: 1px solid #ddd; border-radius: 2px; padding: 8px 7px 0; }
legend { padding: 0 3px; margin-left: -6px; height: 12px; margin-bottom: 0; }
.row { display: flex; align-items: center; }
.decrow { margin-top: 4px; height: 20px; }
.decrow label { width: 78px; }
.spin { width: 55px; height: 19px; display: flex; border: 1px solid #777; }
.spin input { flex: 1; width: 36px; padding-left: 3px; }
.spin > div { width: 15px; display: flex; flex-direction: column; }
.spin button { flex: 1; border: 1px solid #999; background: #eee; }
.symrow { margin-top: 1px; height: 22px; }
.symrow label { width: 45px; }
.drop { flex: 1; height: 21px; border: 1px solid #666; display: flex; padding: 2px 0 2px 2px; background: #fff; }
.drop select { flex: 1; height: 14px; background: #3295fb; color: #e9f4ff; line-height: 12px; outline: 1px dotted #345; outline-offset: -1px; }
.arrow { width: 16px; margin: -2px 0 -2px 1px; border: 1px solid #666; background: #e8e8e8; display: flex; align-items: center; justify-content: center; }
.arrow .dn { border-left-width: 4px; border-right-width: 4px; border-top-width: 4px; width: 8px; height: 4px; }
.neg { padding-top: 1px; height: 18px; }
.right .list { flex: none; height: 137px; margin-left: 1px; }
.panel p { margin: 12px 0 0; }
.actions { display: flex; justify-content: flex-end; gap: 8px; padding-top: 9px; }
.actions button { width: 70px; height: 21px; border: 1px solid #666; border-radius: 3px; background: linear-gradient(#f2f2f2 50%, #d8d8d8 52%, #d2d2d2); box-shadow: inset 0 0 0 1px #fafafa; color: #111; }
.actions .ok { border-color: #2f7a94; box-shadow: inset 0 0 0 1px #7fd3ea; }
.pointer { position: absolute; left: 172px; top: 196px; }
</style>
